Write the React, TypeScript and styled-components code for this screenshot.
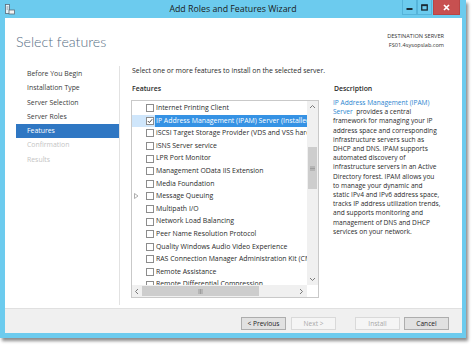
import React from "react";
import styled, { createGlobalStyle } from "styled-components";

const GlobalStyle = createGlobalStyle`
  html, body {
    margin: 0;
    padding: 0;
    background: #fff;
  }
  body {
    width: 474px;
    height: 348px;
    overflow: hidden;
    font-family: "Open Sans", "Noto Sans", sans-serif;
    color: #1e1e1e;
  }
`;

const Window = styled.div`
  display: flex;
  flex-direction: column;
  box-sizing: border-box;
  width: 466px;
  height: 338px;
  background: #6ccbee;
  box-shadow: 2px 3px 3px rgba(0, 0, 0, 0.45);
`;

const TitleBar = styled.div`
  display: grid;
  grid-template-columns: 1fr auto 1fr;
  height: 18px;
  flex-shrink: 0;
`;

const AppIcon = styled.div`
  display: flex;
  align-items: center;
  padding-left: 5px;
`;

const Title = styled.div`
  font-size: 8.8px;
  line-height: 18px;
  color: #1b1b1b;
`;

const Controls = styled.div`
  display: flex;
  justify-content: flex-end;
  align-items: flex-start;
  padding-right: 6px;
`;

const CtlButton = styled.div<{ $close?: boolean }>`
  display: flex;
  align-items: center;
  justify-content: center;
  box-sizing: border-box;
  width: ${(p) => (p.$close ? "27px" : "15px")};
  height: 15px;
  margin-left: ${(p) => (p.$close ? "1px" : "0")};
  background: ${(p) => (p.$close ? "#c75050" : "#6ccbee")};
  border: 1px solid ${(p) => (p.$close ? "#b84545" : "#56b4da")};
  border-top: none;
`;

const Client = styled.div`
  flex: 1;
  display: flex;
  flex-direction: column;
  margin: 0 4px 5px 5px;
  background: #fff;
  min-height: 0;
`;

const Header = styled.div`
  display: flex;
  justify-content: space-between;
  align-items: flex-start;
  height: 48px;
  flex-shrink: 0;
  padding: 0 18px 0 11px;
`;

const Heading = styled.h1`
  margin: 14px 0 0;
  font-family: "Lato", "Open Sans", sans-serif;
  font-size: 14.2px;
  font-weight: 300;
  line-height: 20px;
  color: #566e84;
`;

const Destination = styled.div`
  margin-top: 14px;
  text-align: right;
  font-size: 5.6px;
  line-height: 8.5px;
  color: #333;
`;

const Body = styled.div`
  flex: 1;
  display: flex;
  min-height: 0;
`;

const Nav = styled.div`
  width: 115px;
  flex-shrink: 0;
  box-sizing: border-box;
  padding-top: 1px;
  border-right: 1px solid #e2e2e2;
  margin-bottom: 3px;
`;

const NavItem = styled.div<{ $active?: boolean; $disabled?: boolean }>`
  box-sizing: border-box;
  width: 103px;
  height: 14.3px;
  margin-left: 11px;
  padding-left: 11px;
  font-size: 6.9px;
  line-height: 14.3px;
  background: ${(p) => (p.$active ? "#2f77c3" : "transparent")};
  color: ${(p) => (p.$active ? "#fff" : p.$disabled ? "#c4c4c4" : "#3a3a3a")};
`;

const Main = styled.div`
  flex: 1;
  padding-left: 12px;
  min-width: 0;
`;

const Intro = styled.div`
  font-size: 6.9px;
  line-height: 9px;
  color: #2a2a2a;
`;

const Columns = styled.div`
  display: flex;
  gap: 14px;
  margin-top: 9px;
`;

const FeatureCol = styled.div`
  width: 188px;
  margin-left: -1px;
`;

const Label = styled.div`
  padding-left: 1px;
  font-size: 6.9px;
  font-weight: 600;
  line-height: 10px;
  color: #2a2a2a;
`;

const ListBox = styled.div`
  display: grid;
  grid-template-columns: minmax(0, 1fr) 11px;
  grid-template-rows: minmax(0, 1fr) 12px;
  box-sizing: border-box;
  width: 188px;
  height: 198px;
  margin-top: 6px;
  border: 1px solid #c9c9c9;
`;

const List = styled.div`
  overflow: hidden;
  padding-top: 1px;
`;

const Row = styled.div<{ $selected?: boolean }>`
  display: flex;
  align-items: center;
  height: 12.6px;
  padding-left: 2px;
  white-space: nowrap;
  background: ${(p) => (p.$selected ? "#cfe6fb" : "transparent")};
`;

const Expander = styled.div`
  display: flex;
  align-items: center;
  width: 12px;
  flex-shrink: 0;
`;

const Box = styled.div`
  display: flex;
  align-items: center;
  justify-content: center;
  box-sizing: border-box;
  width: 8px;
  height: 8px;
  flex-shrink: 0;
  border: 1px solid #8c8c8c;
  background: #fff;
`;

const RowText = styled.span<{ $selected?: boolean }>`
  flex: 1;
  height: 12.6px;
  margin-left: 1px;
  padding-left: 1px;
  font-size: 6.9px;
  line-height: 12.6px;
  overflow: hidden;
  color: ${(p) => (p.$selected ? "#fff" : "#2a2a2a")};
  background: ${(p) => (p.$selected ? "#3592e4" : "transparent")};
`;

const VScroll = styled.div`
  display: flex;
  flex-direction: column;
  background: #f0f0f0;
  min-height: 0;
`;

const HScroll = styled.div`
  display: flex;
  background: #f0f0f0;
`;

const Corner = styled.div`
  background: #fff;
`;

const Arrow = styled.div<{ $w: number; $h: number }>`
  display: flex;
  align-items: center;
  justify-content: center;
  width: ${(p) => p.$w}px;
  height: ${(p) => p.$h}px;
  flex-shrink: 0;
`;

const VThumb = styled.div`
  display: flex;
  align-items: center;
  justify-content: center;
  height: 42px;
  margin: 34px 1px 0;
  background: #cdcdcd;
`;

const HThumb = styled.div`
  display: flex;
  align-items: center;
  justify-content: center;
  width: 117px;
  margin: 1px 0 1px -1px;
  background: #cdcdcd;
`;

const Spacer = styled.div`
  flex: 1;
`;

const DescCol = styled.div`
  width: 118px;
`;

const DescText = styled.div`
  margin-top: 4px;
  font-size: 6.6px;
  line-height: 9.2px;
  color: #2a2a2a;
  white-space: nowrap;
`;

const Link = styled.span`
  color: #2c86cf;
`;

const Footer = styled.div`
  display: flex;
  justify-content: flex-end;
  align-items: flex-start;
  height: 25px;
  flex-shrink: 0;
  box-sizing: border-box;
  padding: 8px 13px 0 0;
  background: #f0f0f0;
  border-top: 1px solid #e0e0e0;
`;

const Button = styled.div<{ $disabled?: boolean; $gap: number }>`
  box-sizing: border-box;
  width: 45px;
  height: 13px;
  margin-left: ${(p) => p.$gap}px;
  text-align: center;
  font-size: 6.6px;
  line-height: 11px;
  color: ${(p) => (p.$disabled ? "#a8a8a8" : "#222")};
  background: ${(p) => (p.$disabled ? "#f5f5f5" : "#e1e1e1")};
  border: 1px solid ${(p) => (p.$disabled ? "#d9d9d9" : "#adadad")};
`;

const features = [
  { name: "Internet Printing Client" },
  { name: "IP Address Management (IPAM) Server (Installed)", checked: true, selected: true },
  { name: "iSCSI Target Storage Provider (VDS and VSS hardware providers)" },
  { name: "iSNS Server service" },
  { name: "LPR Port Monitor" },
  { name: "Management OData IIS Extension" },
  { name: "Media Foundation" },
  { name: "Message Queuing", expandable: true },
  { name: "Multipath I/O" },
  { name: "Network Load Balancing" },
  { name: "Peer Name Resolution Protocol" },
  { name: "Quality Windows Audio Video Experience" },
  { name: "RAS Connection Manager Administration Kit (CMAK)" },
  { name: "Remote Assistance" },
  { name: "Remote Differential Compression" },
];

const navItems = [
  { label: "Before You Begin" },
  { label: "Installation Type" },
  { label: "Server Selection" },
  { label: "Server Roles" },
  { label: "Features", active: true },
  { label: "Confirmation", disabled: true },
  { label: "Results", disabled: true },
];

const descLines = [
  "framework for managing your IP",
  "address space and corresponding",
  "infrastructure servers such as",
  "DHCP and DNS. IPAM supports",
  "automated discovery of",
  "infrastructure servers in an Active",
  "Directory forest. IPAM allows you",
  "to manage your dynamic and",
  "static IPv4 and IPv6 address space,",
  "tracks IP address utilization trends,",
  "and supports monitoring and",
  "management of DNS and DHCP",
  "services on your network.",
];

const Chevron = ({ dir }: { dir: "up" | "down" | "left" | "right" }) => {
  const pts = {
    up: "1,4 3.5,1.5 6,4",
    down: "1,2 3.5,4.5 6,2",
    left: "4,1 1.5,3.5 4,6",
    right: "2,1 4.5,3.5 2,6",
  }[dir];
  return (
    <svg width="7" height="7" viewBox="0 0 7 7">
      <polyline points={pts} fill="none" stroke="#7a7a7a" strokeWidth="1" />
    </svg>
  );
};

const App = () => (
  <>
    <GlobalStyle />
    <Window>
      <TitleBar>
        <AppIcon>
          <svg width="10" height="11" viewBox="0 0 10 11">
            <rect x="0.5" y="0.5" width="4" height="9" fill="#e8f4fa" stroke="#5a6b78" strokeWidth="0.8" />
            <rect x="4" y="6" width="5.5" height="4" fill="#f4f4f4" stroke="#5a6b78" strokeWidth="0.8" />
            <line x1="1.5" y1="3" x2="3.5" y2="3" stroke="#5a6b78" strokeWidth="0.7" />
            <line x1="1.5" y1="5" x2="3.5" y2="5" stroke="#5a6b78" strokeWidth="0.7" />
          </svg>
        </AppIcon>
        <Title>Add Roles and Features Wizard</Title>
        <Controls>
          <CtlButton>
            <svg width="7" height="7" viewBox="0 0 7 7">
              <rect x="0.5" y="4" width="6" height="2" fill="#1b2a33" />
            </svg>
          </CtlButton>
          <CtlButton>
            <svg width="7" height="7" viewBox="0 0 7 7">
              <rect x="0.75" y="1" width="5.5" height="5" fill="none" stroke="#1b2a33" strokeWidth="1.3" />
              <rect x="0.5" y="0.5" width="6" height="1.6" fill="#1b2a33" />
            </svg>
          </CtlButton>
          <CtlButton $close>
            <svg width="7" height="7" viewBox="0 0 7 7">
              <path d="M1 1 L6 6 M6 1 L1 6" stroke="#fff" strokeWidth="1.7" />
            </svg>
          </CtlButton>
        </Controls>
      </TitleBar>
      <Client>
        <Header>
          <Heading>Select features</Heading>
          <Destination>
            DESTINATION SERVER
            <br />
            FS01.4sysopslab.com
          </Destination>
        </Header>
        <Body>
          <Nav>
            {navItems.map((n) => (
              <NavItem key={n.label} $active={n.active} $disabled={n.disabled}>
                {n.label}
              </NavItem>
            ))}
          </Nav>
          <Main>
            <Intro>Select one or more features to install on the selected server.</Intro>
            <Columns>
              <FeatureCol>
                <Label>Features</Label>
                <ListBox>
                  <List>
                    {features.map((f) => (
                      <Row key={f.name} $selected={f.selected}>
                        <Expander>
                          {f.expandable && (
                            <svg width="5" height="6" viewBox="0 0 5 6">
                              <polygon points="0.5,0.5 4,3 0.5,5.5" fill="none" stroke="#9a9a9a" strokeWidth="0.8" />
                            </svg>
                          )}
                        </Expander>
                        <Box>
                          {f.checked && (
                            <svg width="6" height="6" viewBox="0 0 6 6">
                              <polyline points="0.8,3 2.4,4.6 5.2,1.2" fill="none" stroke="#4a4a4a" strokeWidth="1" />
                            </svg>
                          )}
                        </Box>
                        <RowText $selected={f.selected}>{f.name}</RowText>
                      </Row>
                    ))}
                  </List>
                  <VScroll>
                    <Arrow $w={11} $h={12}>
                      <Chevron dir="up" />
                    </Arrow>
                    <VThumb>
                      <svg width="5" height="5" viewBox="0 0 5 5">
                        <path d="M0 1 H5 M0 2.5 H5 M0 4 H5" stroke="#8a8a8a" strokeWidth="0.7" />
                      </svg>
                    </VThumb>
                    <Spacer />
                    <Arrow $w={11} $h={12}>
                      <Chevron dir="down" />
                    </Arrow>
                  </VScroll>
                  <HScroll>
                    <Arrow $w={11} $h={12}>
                      <Chevron dir="left" />
                    </Arrow>
                    <HThumb>
                      <svg width="5" height="5" viewBox="0 0 5 5">
                        <path d="M1 0 V5 M2.5 0 V5 M4 0 V5" stroke="#8a8a8a" strokeWidth="0.7" />
                      </svg>
                    </HThumb>
                    <Spacer />
                    <Arrow $w={11} $h={12}>
                      <Chevron dir="right" />
                    </Arrow>
                  </HScroll>
                  <Corner />
                </ListBox>
              </FeatureCol>
              <DescCol>
                <Label>Description</Label>
                <DescText>
                  <Link>IP Address Management (IPAM)</Link>
                  <br />
                  <Link>Server</Link>&nbsp; provides a central
                  {descLines.map((l) => (
                    <React.Fragment key={l}>
                      <br />
                      {l}
                    </React.Fragment>
                  ))}
                </DescText>
              </DescCol>
            </Columns>
          </Main>
        </Body>
        <Footer>
          <Button $gap={0}>&lt; Previous</Button>
          <Button $gap={5} $disabled>
            Next &gt;
          </Button>
          <Button $gap={19} $disabled>
            Install
          </Button>
          <Button $gap={4}>Cancel</Button>
        </Footer>
      </Client>
    </Window>
  </>
);

export default App;
